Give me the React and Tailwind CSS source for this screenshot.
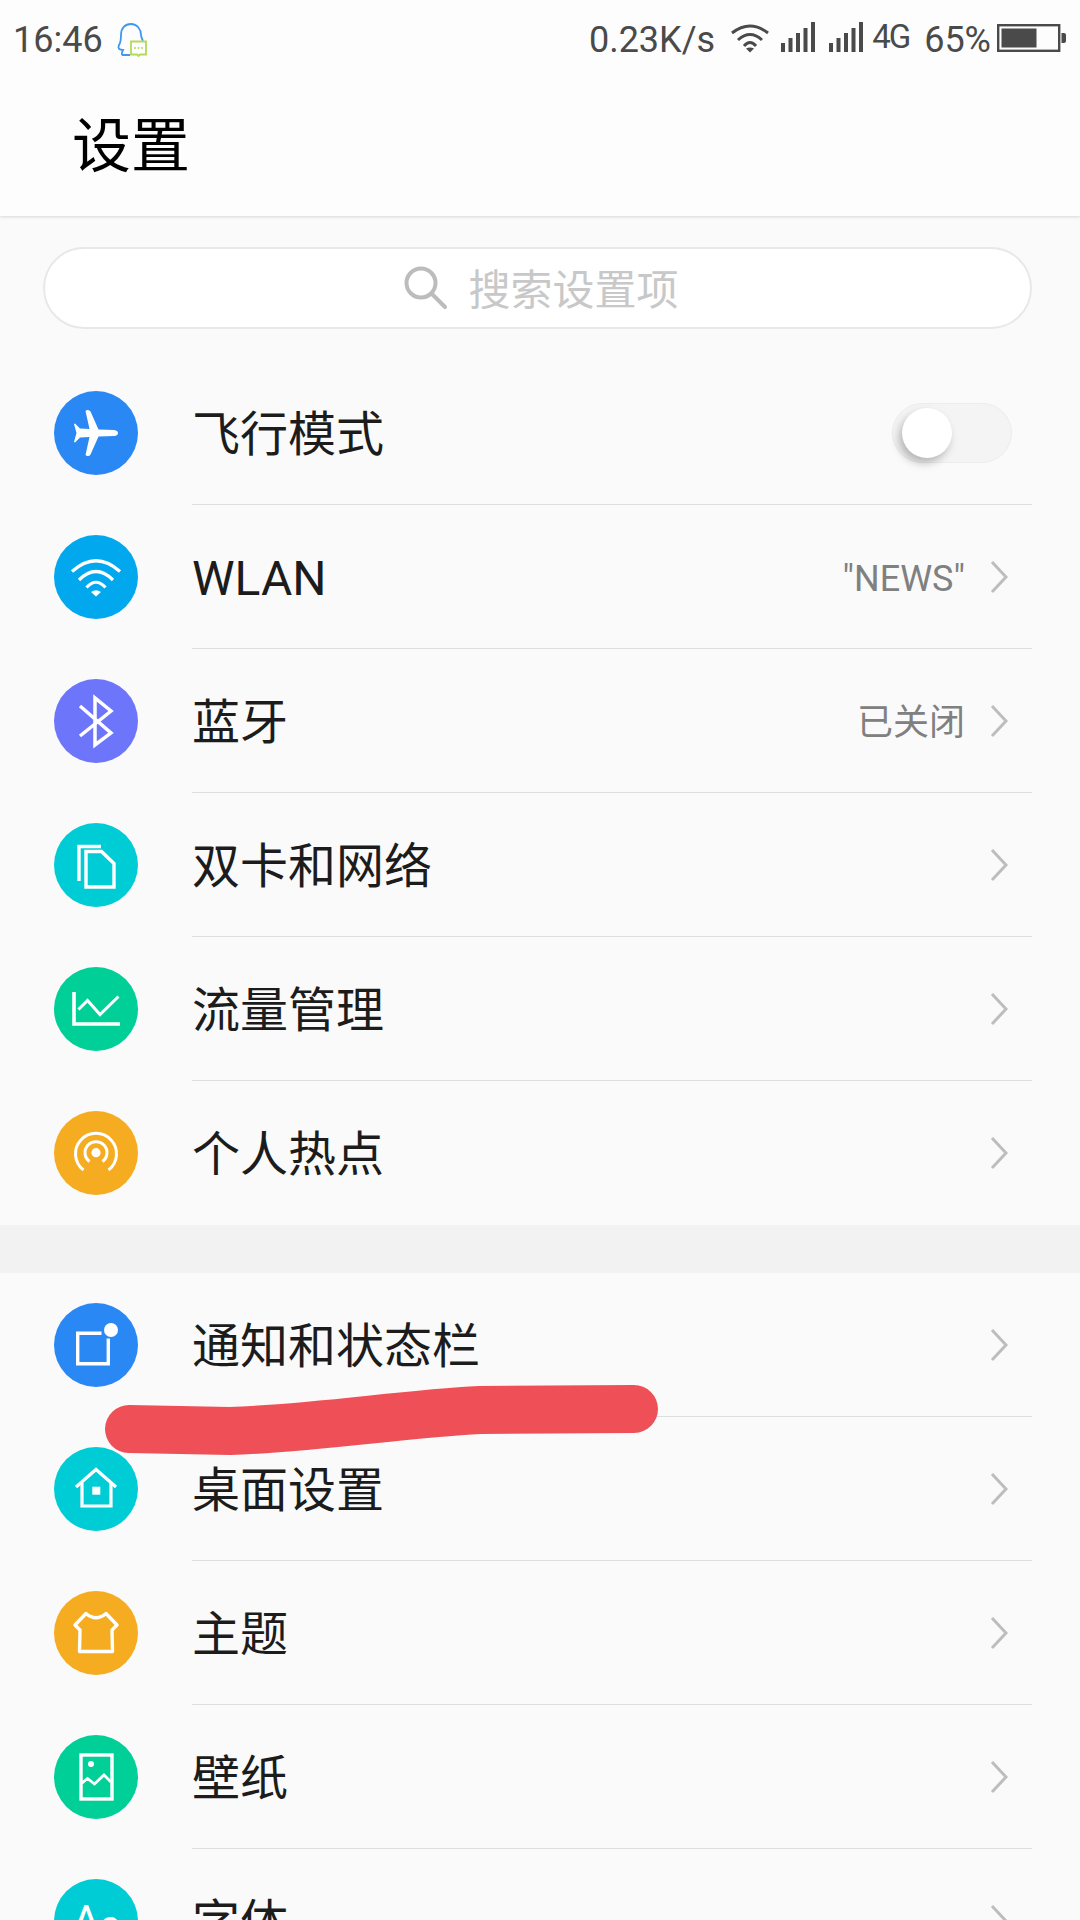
const cjk = 'font-["Roboto","Noto_Sans_CJK_SC",sans-serif]'

function Ico({ children }) {
  return (
    <svg width="84" height="84" viewBox="0 0 84 84" fill="none" stroke="#fff" strokeWidth="3.4">
      {children}
    </svg>
  )
}

const icons = {
  plane: (
    <Ico>
      <path
        stroke="none"
        fill="#fff"
        d="M64 42 Q64 39.5 60 39 L44.5 38.5 L36.5 20.5 Q35.5 18.5 33 19 L31.5 20 L35.5 38 L26 37.5 L21 32.5 L20 33 L22.5 42 L20 51 L21 51.5 L26 46.5 L35.5 46 L31.5 64 L33 65 Q35.5 65.5 36.5 63.5 L44.5 45.5 L60 45 Q64 44.5 64 42Z"
      />
    </Ico>
  ),
  wifi: (
    <Ico>
      <path strokeWidth="3.2" d="M18 36.5 Q42 15 66 36.5" />
      <path strokeWidth="3.2" d="M25 45 Q42 28 59 45" />
      <path strokeWidth="3.2" d="M32.5 52.5 Q42 42 51.5 52.5" />
      <path stroke="none" fill="#fff" d="M37 57 Q42 53.5 47 57 L42 61.5Z" />
    </Ico>
  ),
  bluetooth: (
    <Ico>
      <path strokeWidth="3.5" d="M26 27 L57 54 L41 66 V19 L57 32 L26 57" />
    </Ico>
  ),
  sim: (
    <Ico>
      <path strokeWidth="3.4" d="M25 58 V23.5 H47" />
      <path strokeWidth="3.4" d="M32 28.5 H47.5 L60 40.5 V64 H32Z" />
    </Ico>
  ),
  chart: (
    <Ico>
      <path strokeWidth="3.6" d="M20 25 V57 H66" />
      <path strokeWidth="3" d="M24.5 42.5 L33.5 33.5 L46 47.5 L64.5 29.5" />
    </Ico>
  ),
  hotspot: (
    <Ico>
      <circle cx="42" cy="41.7" r="4.6" fill="#fff" stroke="none" />
      <path strokeWidth="3" d="M35.5 50.5 A11 11 0 1 1 48.5 50.5" />
      <path strokeWidth="3" d="M29.5 59 A20.5 20.5 0 1 1 54.5 59" />
    </Ico>
  ),
  notify: (
    <Ico>
      <path strokeWidth="3.4" d="M47.5 30.3 H23.7 V60.7 H54.3 V35.5" />
      <circle cx="57" cy="27" r="7" fill="#fff" stroke="none" />
    </Ico>
  ),
  home: (
    <Ico>
      <path strokeWidth="3.2" d="M22 40 L42 22.5 L62 40" />
      <path strokeWidth="3.2" d="M28 36 V59 H57 V36" />
      <rect x="38.3" y="39.7" width="8" height="8" fill="#fff" stroke="none" />
    </Ico>
  ),
  shirt: (
    <Ico>
      <path strokeWidth="3.4" strokeLinejoin="round" d="M32 22.5 Q42 31 52 22.5 L63 34 L58 39 L58.5 60.5 H25.5 L26 39 L21 34Z" />
    </Ico>
  ),
  wallpaper: (
    <Ico>
      <rect x="27" y="20" width="31" height="44" strokeWidth="3.4" />
      <circle cx="37" cy="29" r="3" fill="#fff" stroke="none" />
      <path strokeWidth="2.8" d="M27.5 48.5 L33.5 43.5 L40.5 49 L50 40 L57 47" />
    </Ico>
  ),
  font: (
    <span className="font-['Roboto',sans-serif] text-[44px] leading-none text-white pt-[1px]">
      A<span className="text-[36px]">a</span>
    </span>
  ),
}

function Chevron() {
  return (
    <svg width="18" height="34" viewBox="0 0 18 34" fill="none" stroke="#bdbdbd" strokeWidth="3">
      <path d="M2 2 L16 17 L2 32" />
    </svg>
  )
}

function Toggle() {
  return (
    <div className="w-[120px] h-[60px] rounded-full bg-[#f4f4f4] border border-[#ececec] flex items-center pl-[9px] mr-[-4px]">
      <div className="w-[50px] h-[50px] rounded-full bg-white shadow-[-3px_5px_8px_rgba(0,0,0,0.26)]" />
    </div>
  )
}

function Row({ icon, color, label, value, toggle, last }) {
  return (
    <div className="flex h-[144px]">
      <div className="pl-[54px] flex items-center">
        <div className={`w-[84px] h-[84px] rounded-full flex items-center justify-center ${color}`}>
          {icons[icon]}
        </div>
      </div>
      <div className={`ml-[54px] mr-[48px] flex-1 flex items-center justify-between pr-[24px] ${last ? '' : 'border-b border-[#dedede]'}`}>
        <span className="text-[48px] text-[#1c1c1c] pt-[4px]">{label}</span>
        <div className="flex items-center gap-[25px]">
          {value && <span className="text-[36px] text-[#808080] pt-[4px]">{value}</span>}
          {toggle ? <Toggle /> : <Chevron />}
        </div>
      </div>
    </div>
  )
}

function Signal() {
  return (
    <svg width="34" height="30" viewBox="0 0 34 30" fill="#4a4a4a">
      <rect x="0" y="21" width="4" height="9" />
      <rect x="7.5" y="16" width="4" height="14" />
      <rect x="15" y="11" width="4" height="19" />
      <rect x="22.5" y="6" width="4" height="24" />
      <rect x="30" y="0" width="4" height="30" />
    </svg>
  )
}

function StatusBar() {
  return (
    <div className="h-[80px] flex items-center justify-between pl-[13px] pr-[13px] text-[#4a4a4a] text-[36px]">
      <div className="flex items-center gap-[12px]">
        <span>16:46</span>
        <svg width="36" height="38" viewBox="0 0 36 38" fill="none" strokeWidth="1.8">
          <path stroke="#3f97ee" d="M15 34 H8 C6 34 7 31 8 29 C4 29 2.5 27 4 24 C6 21 6 18 6 14 C6 7 10 3 16 3 C22 3 26 8 26 14 C26 16 27 18 28 20" />
          <path stroke="#b5d95a" fill="#fff" d="M16 20.5 H31 V33.5 H25 L23.5 35 L22 33.5 H16Z" />
          <g fill="#b5d95a">
            <circle cx="20" cy="27" r="1" />
            <circle cx="23.5" cy="27" r="1" />
            <circle cx="27" cy="27" r="1" />
          </g>
        </svg>
      </div>
      <div className="flex items-center">
        <span>0.23K/s</span>
        <svg className="ml-[16px] mb-[4px]" width="38" height="30" viewBox="0 0 38 30" fill="none" stroke="#4a4a4a" strokeWidth="3">
          <path d="M1 10 Q19 -4 37 10" />
          <path d="M7 17 Q19 6 31 17" />
          <path d="M13 23 Q19 16 25 23" />
          <path stroke="none" fill="#4a4a4a" d="M15 25.5 Q19 23.5 23 25.5 L19 29.5Z" />
        </svg>
        <div className="ml-[12px] mb-[6px]"><Signal /></div>
        <div className="ml-[14px] mb-[6px]"><Signal /></div>
        <span className="ml-[9px] text-[33px] tracking-[-2px] mb-[6px]">4G</span>
        <span className="ml-[15px]">65%</span>
        <svg className="ml-[6px] mb-[5px]" width="70" height="28" viewBox="0 0 70 28">
          <rect x="1.2" y="1.2" width="61" height="25.6" fill="none" stroke="#4a4a4a" strokeWidth="2.4" />
          <rect x="4.5" y="4.5" width="35" height="19" fill="#4a4a4a" />
          <path d="M64.5 9 H67 Q69 9 69 11 V17 Q69 19 67 19 H64.5Z" fill="#4a4a4a" />
        </svg>
      </div>
    </div>
  )
}

export default function App() {
  return (
    <div className={`relative w-[1080px] h-[1920px] overflow-hidden bg-[#fafafa] ${cjk}`}>
      <div className="h-[216px] bg-[#fdfdfd] shadow-[0_1px_3px_rgba(0,0,0,0.14)]">
        <StatusBar />
        <div className="h-[134px] pl-[72px] flex items-center text-[59px] text-black">设置</div>
      </div>

      <div className="mt-[31px] ml-[43px] mr-[48px] h-[82px] rounded-full bg-white border-2 border-[#e8e8e8] flex items-center justify-center gap-[20px] pl-[8px]">
        <svg width="44" height="44" viewBox="0 0 44 44" fill="none" stroke="#bcbcbc" strokeWidth="4">
          <circle cx="17" cy="17" r="14.5" />
          <path strokeLinecap="round" d="M28 28 L41 41" />
        </svg>
        <span className="text-[42px] text-[#c8c8c8] pt-[4px]">搜索设置项</span>
      </div>

      <div className="mt-[32px]">
        <Row icon="plane" color="bg-[#2a88f5]" label="飞行模式" toggle />
        <Row icon="wifi" color="bg-[#02a8ee]" label="WLAN" value={'"NEWS"'} />
        <Row icon="bluetooth" color="bg-[#6d75fb]" label="蓝牙" value="已关闭" />
        <Row icon="sim" color="bg-[#00ccd6]" label="双卡和网络" />
        <Row icon="chart" color="bg-[#00d097]" label="流量管理" />
        <Row icon="hotspot" color="bg-[#f5ac20]" label="个人热点" last />
      </div>

      <div className="h-[48px] bg-[#f2f2f2]" />

      <div>
        <Row icon="notify" color="bg-[#2a88f5]" label="通知和状态栏" />
        <Row icon="home" color="bg-[#00ccd6]" label="桌面设置" />
        <Row icon="shirt" color="bg-[#f5ac20]" label="主题" />
        <Row icon="wallpaper" color="bg-[#00d097]" label="壁纸" />
        <Row icon="font" color="bg-[#00ccd6]" label="字体" />
      </div>

      <svg className="absolute left-0 top-0 pointer-events-none" width="1080" height="1920" fill="none">
        <path
          d="M129 1429 L230 1431 C320 1428 400 1414 480 1410 L634 1409"
          stroke="#ef5057"
          strokeWidth="48"
          strokeLinecap="round"
        />
      </svg>
    </div>
  )
}
